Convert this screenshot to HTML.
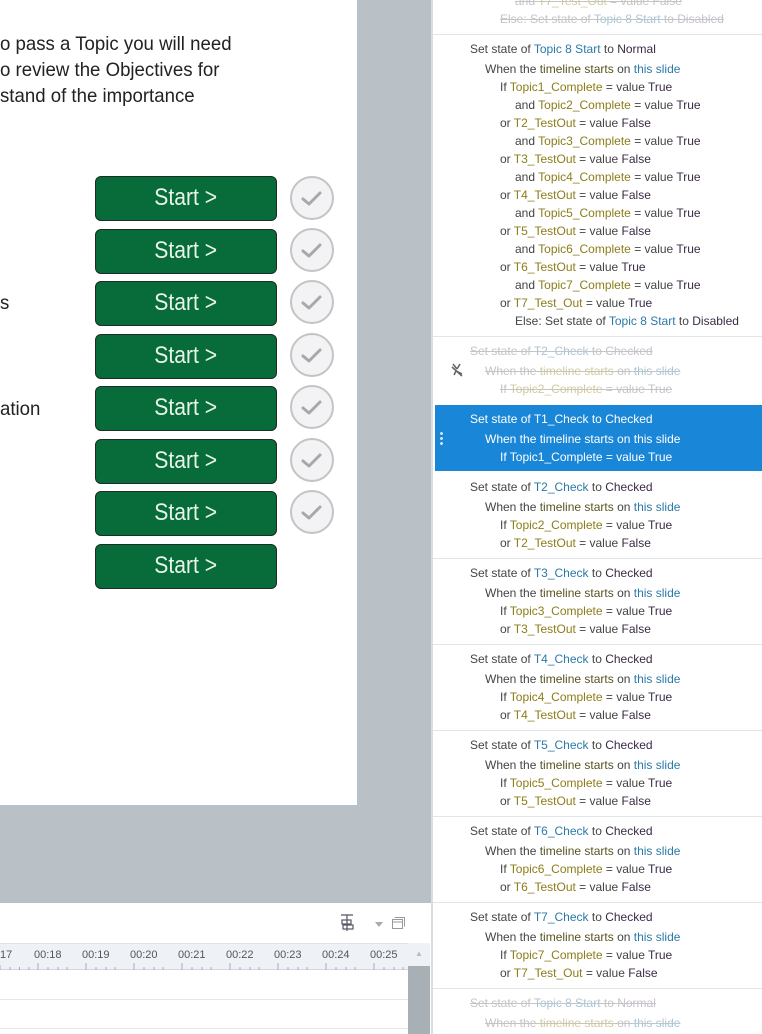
<!DOCTYPE html>
<html><head><meta charset="utf-8"><style>
*{margin:0;padding:0;box-sizing:border-box}
body{width:762px;height:1034px;position:relative;overflow:hidden;background:#fff;font-family:"Liberation Sans",sans-serif}
#left{position:absolute;left:0;top:0;width:431px;height:903px;background:#b9c1c6}
#slide{position:absolute;left:0;top:0;width:357px;height:805px;background:#fff}
.st{position:absolute;left:0;font-size:19.5px;color:#222;white-space:nowrap;transform-origin:left;transform:scaleX(.955)}
.btn{position:absolute;left:95px;width:182px;height:45px;background:#076b3a;border:1.5px solid #1d2b22;border-radius:6px;color:#e8f5e8;font-size:24px;text-align:center;line-height:42px}
.btn span{display:inline-block;transform:scaleX(.88)}
#tb{position:absolute;left:0;top:903px;width:431px;height:40px;background:#fff}
#ruler{position:absolute;left:0;top:943px;width:408px;height:27px;background:#eef2f6;border-top:1px solid #dde3e8;border-bottom:1px solid #cfd6dc}
.tm{position:absolute;top:5px;font-size:11px;color:#555}
#sb{position:absolute;left:408px;top:943px;width:22px;height:91px;background:#eef2f6}
#sbt{position:absolute;left:408px;top:966px;width:22px;height:68px;background:#a8b0b5}
.rl{position:absolute;left:0;width:408px;height:1px;background:#e3e7ea}
#right{position:absolute;left:431px;top:0;width:331px;height:1034px;background:#fff;border-left:2px solid #d8dde0}
.l{position:absolute;height:18px;line-height:18px;font-size:12px;color:#444;white-space:nowrap}
.b{color:#2a7aa8}.o{color:#8c7d18}.t{color:#5b5220}.v{color:#3a2a45}
.f{color:#c4c4c4;text-decoration:line-through}
.f .b{color:#a9c6d8}.f .o{color:#d4cb99}.f .v{color:#c9bfcf}
.sep{position:absolute;left:433px;width:329px;height:1px;background:#e2e5e7}
#hl{position:absolute;left:435px;top:405px;width:327px;height:66px;background:#1a86d8}
#hl .l,#hl .l span{color:#fff}
</style></head><body>
<div id="left">
<div id="slide">
<div class="st" style="top:33px">o pass a Topic you will need</div>
<div class="st" style="top:59px">o review the Objectives for</div>
<div class="st" style="top:85px">stand of the importance</div>
<div class="st" style="top:292px">s</div>
<div class="st" style="top:398px">ation</div>
<div class="btn" style="top:176px"><span>Start &gt;</span></div>
<div class="btn" style="top:229px"><span>Start &gt;</span></div>
<div class="btn" style="top:281px"><span>Start &gt;</span></div>
<div class="btn" style="top:334px"><span>Start &gt;</span></div>
<div class="btn" style="top:386px"><span>Start &gt;</span></div>
<div class="btn" style="top:439px"><span>Start &gt;</span></div>
<div class="btn" style="top:491px"><span>Start &gt;</span></div>
<div class="btn" style="top:544px"><span>Start &gt;</span></div>
<svg style="position:absolute;left:0;top:0" width="357" height="540">
<g fill="#f3f3f5" stroke="#c4c4c4" stroke-width="2">
<circle cx="312" cy="198" r="21"/><circle cx="312" cy="250" r="21"/><circle cx="312" cy="302" r="21"/><circle cx="312" cy="355" r="21"/><circle cx="312" cy="407" r="21"/><circle cx="312" cy="460" r="21"/><circle cx="312" cy="512" r="21"/></g>
<g fill="none" stroke="#a8a8a8" stroke-width="3" stroke-linecap="round" stroke-linejoin="round">
<path d="M303 199l6 5 11-11"/><path d="M303 251l6 5 11-11"/><path d="M303 303l6 5 11-11"/><path d="M303 356l6 5 11-11"/><path d="M303 408l6 5 11-11"/><path d="M303 461l6 5 11-11"/><path d="M303 513l6 5 11-11"/></g>
</svg>
</div>
</div>
<div id="tb">
<svg style="position:absolute;left:336px;top:10px" width="70" height="20"><g stroke="#556" fill="none" stroke-width="1.2"><path d="M11 2v16M5 2h12"/><rect x="6" y="7" width="9" height="4"/><rect x="7" y="12" width="10" height="4"/></g><path d="M39 9h8l-4 5z" fill="#aaa"/><g stroke="#999" fill="none"><rect x="56.5" y="6.5" width="10" height="9"/><path d="M58.5 4.5h10v9M56.5 9h10"/></g></svg>
</div>
<div id="ruler">
<span class="tm" style="left:0">17</span><span class="tm" style="left:34px">00:18</span><span class="tm" style="left:82px">00:19</span><span class="tm" style="left:130px">00:20</span><span class="tm" style="left:178px">00:21</span><span class="tm" style="left:226px">00:22</span><span class="tm" style="left:274px">00:23</span><span class="tm" style="left:322px">00:24</span><span class="tm" style="left:370px">00:25</span>
<svg style="position:absolute;left:0;top:18px" width="408" height="8"><path d="M0 3v5M10 5v3M19.5 5v3M29 5v3M38 1v7M48 5v3M58 5v3M67 5v3M86 1v7M96 5v3M106 5v3M115 5v3M134 1v7M144 5v3M154 5v3M163 5v3M182 1v7M192 5v3M202 5v3M211 5v3M230 1v7M240 5v3M250 5v3M259 5v3M278 1v7M288 5v3M298 5v3M307 5v3M326 1v7M336 5v3M346 5v3M355 5v3M374 1v7M384 5v3M394 5v3M403 5v3" stroke="#aab" stroke-width="1"/></svg>
</div>
<div class="rl" style="top:999px"></div><div class="rl" style="top:1028px"></div>
<div id="sb"><span style="position:absolute;left:7px;top:6px;font-size:8px;color:#bbb">▲</span></div><div id="sbt"></div>

<div id="right"></div>
<div class="l f" style="left:515px;top:-8px">and <span class="o">T7_Test_Out</span> = value <span class="v">False</span></div>
<div class="l f" style="left:500px;top:10px">Else: Set state of <span class="b">Topic 8 Start</span> to <span class="v">Disabled</span></div>
<div class="sep" style="top:34px"></div>
<div class="l" style="left:470px;top:40px">Set state of <span class="b">Topic 8 Start</span> to <span class="v">Normal</span></div>
<div class="l" style="left:485px;top:60px">When the <span class="t">timeline starts</span> on <span class="b">this slide</span></div>
<div class="l" style="left:500px;top:78px">If <span class="o">Topic1_Complete</span> = value <span class="v">True</span></div>
<div class="l" style="left:515px;top:96px">and <span class="o">Topic2_Complete</span> = value <span class="v">True</span></div>
<div class="l" style="left:500px;top:114px">or <span class="o">T2_TestOut</span> = value <span class="v">False</span></div>
<div class="l" style="left:515px;top:132px">and <span class="o">Topic3_Complete</span> = value <span class="v">True</span></div>
<div class="l" style="left:500px;top:150px">or <span class="o">T3_TestOut</span> = value <span class="v">False</span></div>
<div class="l" style="left:515px;top:168px">and <span class="o">Topic4_Complete</span> = value <span class="v">True</span></div>
<div class="l" style="left:500px;top:186px">or <span class="o">T4_TestOut</span> = value <span class="v">False</span></div>
<div class="l" style="left:515px;top:204px">and <span class="o">Topic5_Complete</span> = value <span class="v">True</span></div>
<div class="l" style="left:500px;top:222px">or <span class="o">T5_TestOut</span> = value <span class="v">False</span></div>
<div class="l" style="left:515px;top:240px">and <span class="o">Topic6_Complete</span> = value <span class="v">True</span></div>
<div class="l" style="left:500px;top:258px">or <span class="o">T6_TestOut</span> = value <span class="v">True</span></div>
<div class="l" style="left:515px;top:276px">and <span class="o">Topic7_Complete</span> = value <span class="v">True</span></div>
<div class="l" style="left:500px;top:294px">or <span class="o">T7_Test_Out</span> = value <span class="v">True</span></div>
<div class="l" style="left:515px;top:312px">Else: Set state of <span class="b">Topic 8 Start</span> to <span class="v">Disabled</span></div>
<div class="sep" style="top:336px"></div>
<div class="l f" style="left:470px;top:342px">Set state of <span class="b">T2_Check</span> to <span class="v">Checked</span></div>
<div class="l f" style="left:485px;top:362px">When the <span class="o">timeline starts</span> on <span class="b">this slide</span></div>
<div class="l f" style="left:500px;top:380px">If <span class="o">Topic2_Complete</span> = value <span class="v">True</span></div>
<svg style="position:absolute;left:450px;top:362px" width="16" height="16"><path d="M3 2l4 5M7 7l3-5M6 9l-2 4M6 9l6 3M2 5l10 9" stroke="#666" stroke-width="1.6" fill="none"/></svg>
<div id="hl">
<div class="l" style="left:35px;top:5px">Set state of T1_Check to Checked</div>
<div class="l" style="left:50px;top:25px">When the timeline starts on this slide</div>
<div class="l" style="left:65px;top:43px">If Topic1_Complete = value True</div>
<div style="position:absolute;left:5px;top:26px;width:3px;height:14px;background:radial-gradient(circle,#cfe6f8 1.3px,transparent 1.6px) 0 0/3px 5px"></div>
</div>

<div class="l" style="left:470px;top:478px">Set state of <span class="b">T2_Check</span> to <span class="v">Checked</span></div>
<div class="l" style="left:485px;top:498px">When the <span class="t">timeline starts</span> on <span class="b">this slide</span></div>
<div class="l" style="left:500px;top:516px">If <span class="o">Topic2_Complete</span> = value <span class="v">True</span></div>
<div class="l" style="left:500px;top:534px">or <span class="o">T2_TestOut</span> = value <span class="v">False</span></div>
<div class="sep" style="top:558px"></div>
<div class="l" style="left:470px;top:564px">Set state of <span class="b">T3_Check</span> to <span class="v">Checked</span></div>
<div class="l" style="left:485px;top:584px">When the <span class="t">timeline starts</span> on <span class="b">this slide</span></div>
<div class="l" style="left:500px;top:602px">If <span class="o">Topic3_Complete</span> = value <span class="v">True</span></div>
<div class="l" style="left:500px;top:620px">or <span class="o">T3_TestOut</span> = value <span class="v">False</span></div>
<div class="sep" style="top:644px"></div>
<div class="l" style="left:470px;top:650px">Set state of <span class="b">T4_Check</span> to <span class="v">Checked</span></div>
<div class="l" style="left:485px;top:670px">When the <span class="t">timeline starts</span> on <span class="b">this slide</span></div>
<div class="l" style="left:500px;top:688px">If <span class="o">Topic4_Complete</span> = value <span class="v">True</span></div>
<div class="l" style="left:500px;top:706px">or <span class="o">T4_TestOut</span> = value <span class="v">False</span></div>
<div class="sep" style="top:730px"></div>
<div class="l" style="left:470px;top:736px">Set state of <span class="b">T5_Check</span> to <span class="v">Checked</span></div>
<div class="l" style="left:485px;top:756px">When the <span class="t">timeline starts</span> on <span class="b">this slide</span></div>
<div class="l" style="left:500px;top:774px">If <span class="o">Topic5_Complete</span> = value <span class="v">True</span></div>
<div class="l" style="left:500px;top:792px">or <span class="o">T5_TestOut</span> = value <span class="v">False</span></div>
<div class="sep" style="top:816px"></div>
<div class="l" style="left:470px;top:822px">Set state of <span class="b">T6_Check</span> to <span class="v">Checked</span></div>
<div class="l" style="left:485px;top:842px">When the <span class="t">timeline starts</span> on <span class="b">this slide</span></div>
<div class="l" style="left:500px;top:860px">If <span class="o">Topic6_Complete</span> = value <span class="v">True</span></div>
<div class="l" style="left:500px;top:878px">or <span class="o">T6_TestOut</span> = value <span class="v">False</span></div>
<div class="sep" style="top:902px"></div>
<div class="l" style="left:470px;top:908px">Set state of <span class="b">T7_Check</span> to <span class="v">Checked</span></div>
<div class="l" style="left:485px;top:928px">When the <span class="t">timeline starts</span> on <span class="b">this slide</span></div>
<div class="l" style="left:500px;top:946px">If <span class="o">Topic7_Complete</span> = value <span class="v">True</span></div>
<div class="l" style="left:500px;top:964px">or <span class="o">T7_Test_Out</span> = value <span class="v">False</span></div>
<div class="sep" style="top:988px"></div>
<div class="l f" style="left:470px;top:994px">Set state of <span class="b">Topic 8 Start</span> to <span class="v">Normal</span></div>
<div class="l f" style="left:485px;top:1014px">When the <span class="o">timeline starts</span> on <span class="b">this slide</span></div>
</body></html>
